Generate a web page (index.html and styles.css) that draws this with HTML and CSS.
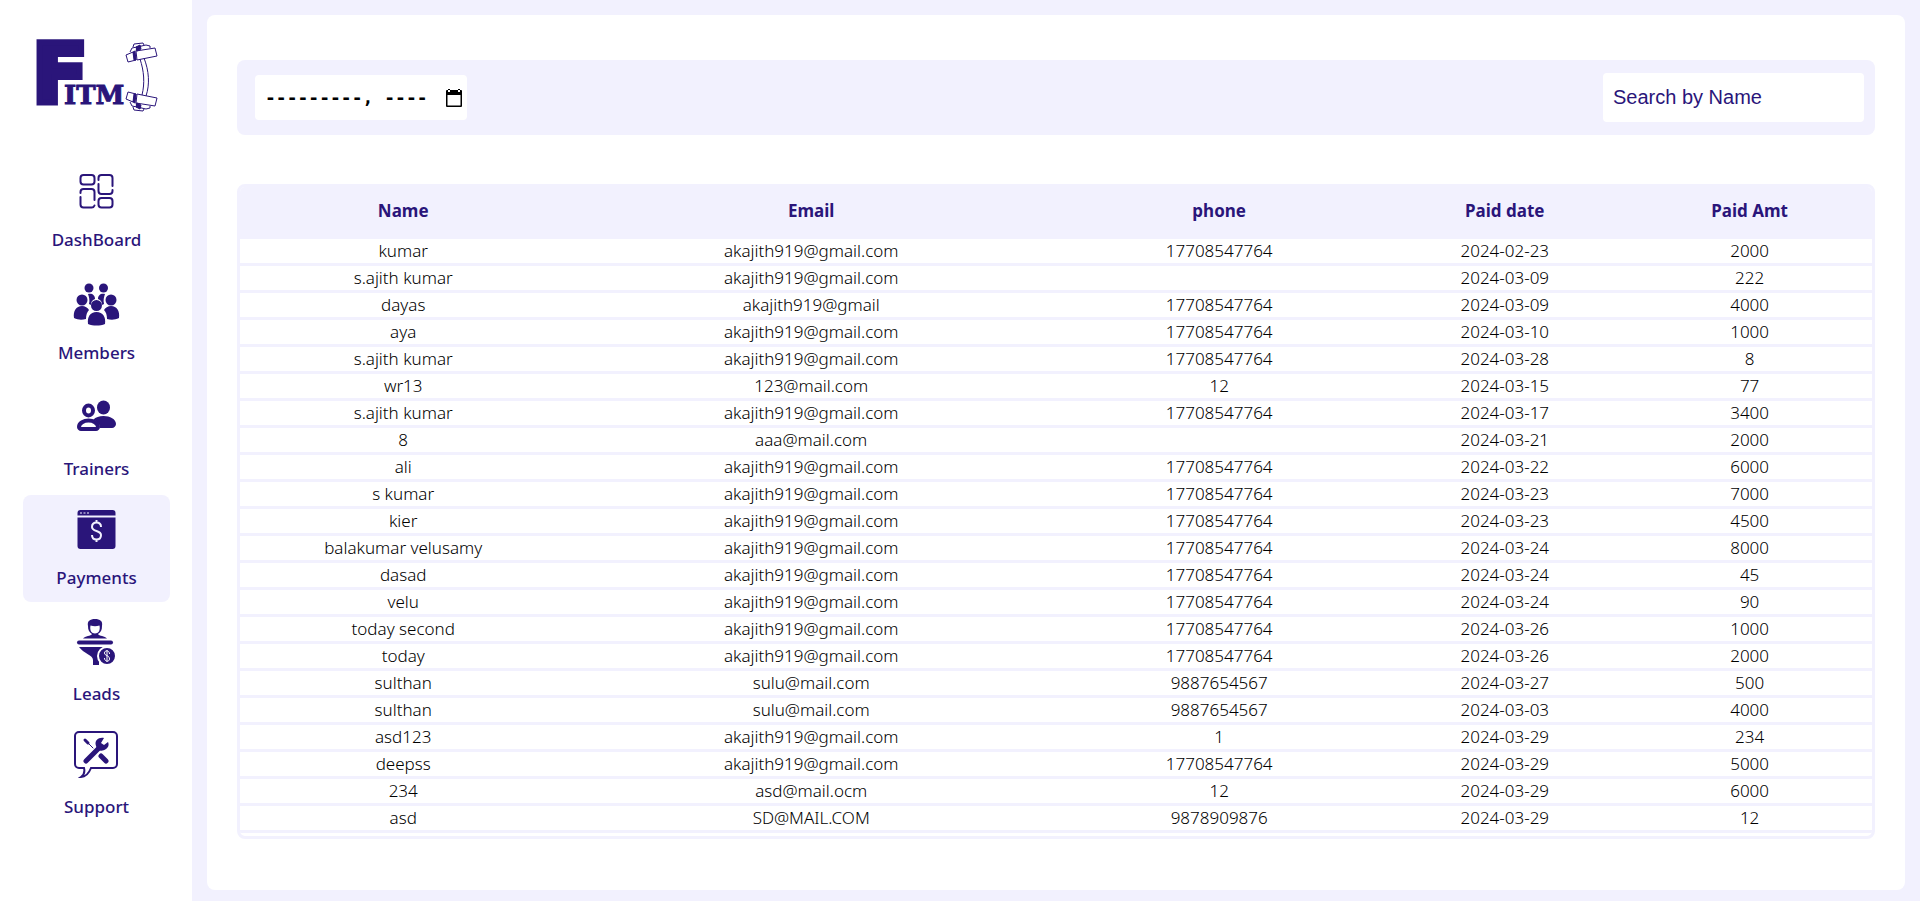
FILE: index.html
```html
<!DOCTYPE html>
<html lang="en">

<head>
    <meta charset="UTF-8">
    <meta name="viewport" content="width=device-width, initial-scale=1.0">
    <title>Payments</title>
    <link rel="stylesheet" href="styles.css">
</head>

<body>
    <div class="app">
        <aside class="sidebar">
            <svg class="logo" width="122" height="74" viewBox="36 39 122 74" role="img" aria-label="FITM">
                <text class="logo-f" x="32" y="102">F</text>
                <text class="logo-itm" x="64" y="104">ITM</text>
                <g class="line">
                    <path d="M140 59c4 12 5 24 2 36M144 58c5 13 6 26 2 38" />
                    <g id="weight">
                        <path d="M126 55l7-3 3 8-8 2z" />
                        <path d="M136 51l19-3 2 8-20 4z" />
                        <path d="M130 52l2-4 5-1-1 4M137 47l9-2 4 1v2M133 47l1-3 9-1 1 2M138 50l3-4" />
                        <path class="solid" d="M133 52l2-1 1 9-2 0zM136 47l4-2 1 4-4 2z" />
                    </g>
                    <use href="#weight" transform="matrix(1 0 0 -1 0 154)" />
                </g>
            </svg>
            <nav class="menu">
                <a class="menu-item" href="#">
                    <svg class="icon" width="48" height="40" viewBox="1 0 48 40">
                        <g class="stroke">
                            <rect x="8.500" y="3" width="14" height="9.500" rx="3" />
                            <rect x="26.500" y="26" width="14" height="9.500" rx="3" />
                            <path d="M26.500 8V6a3 3 0 0 1 3-3h8a3 3 0 0 1 3 3v8M26.500 12v7a3 3 0 0 0 3 3h8a3 3 0 0 0 3-3v-1" />
                            <path d="M8.500 21v-1a3 3 0 0 1 3-3h8a3 3 0 0 1 3 3v8M8.500 25v7.500a3 3 0 0 0 3 3h8a3 3 0 0 0 3-2" />
                        </g>
                    </svg>
                    <span>DashBoard</span>
                </a>
                <a class="menu-item" href="#">
                    <svg class="icon" width="48" height="44" viewBox="1 0 48 44">
                        <circle cx="17" cy="7" r="4.500" />
                        <circle cx="31.500" cy="7" r="4.500" />
                        <path d="M16 13c4-1 7 1 7 5-3 1-4 3-4 6l-2-1c1-4 0-7-1-10zM33 13c-4-1-7 1-7 5 3 1 4 3 4 6l2-1c-1-4 0-7 1-10z" />
                        <circle cx="10" cy="19" r="5.500" />
                        <circle cx="39" cy="19" r="5.500" />
                        <path d="M2 37c-1-7 2-12 8-12 3 0 6 2 7 4-2 2-3 5-3 9-4 1-8 1-12-1zM47 37c1-7-2-12-8-12-3 0-6 2-7 4 2 2 3 5 3 9 4 1 8 1 12-1z" />
                        <circle cx="24.500" cy="24.500" r="5.500" />
                        <path d="M16 43c-1-7 2-12 8.500-12s9.500 5 8.500 12c-5 2-12 2-17 0z" />
                    </svg>
                    <span>Members</span>
                </a>
                <a class="menu-item" href="#">
                    <svg class="icon" width="48" height="47" viewBox="1 0 48 47">
                        <ellipse cx="31.500" cy="13.500" rx="6.500" ry="7" />
                        <path d="M21 26c3-3 6-4 10.500-4C38 22 44 25 44 30c0 2-2 4-4 4H28c0-4-3-7-7-8z" />
                        <ellipse class="ring" cx="16.500" cy="16.500" rx="4.500" ry="5" />
                        <path class="ring body" d="M7 33c0-4 5-6.500 9.500-6.500S26 29 26 33c0 1-1 2-2 2H9c-1 0-2-1-2-2z" />
                    </svg>
                    <span>Trainers</span>
                </a>
                <a class="menu-item active" href="#">
                    <svg class="icon" width="48" height="40" viewBox="1 0 48 40">
                        <path d="M5.500 5.500V3a3 3 0 0 1 3-3h32a3 3 0 0 1 3 3v2.500zM5.500 7.500h38V36a3 3 0 0 1-3 3h-32a3 3 0 0 1-3-3z" />
                        <path class="light dots" d="M8 3h2M11.500 3h2M15 3h2" />
                        <path class="light" d="M29 17c0-3-2-4.500-4.500-4.500S20 14 20 17c0 5 9 3 9 8 0 3-2 4.500-4.500 4.500S20 28 20 25M24.500 10v3M24.500 29v3" />
                    </svg>
                    <span>Payments</span>
                </a>
                <a class="menu-item" href="#">
                    <svg class="icon" width="48" height="47" viewBox="1 0 48 47">
                        <path d="M16 7c-1-5 2-7 7-7s8 2 7 7c0 4-1 6-4 8 1 2 7 2 9 4.500H11c2-2.500 8-2.500 9-4.500-3-2-4-4-4-8z" />
                        <path class="face" d="M18.500 6.500c3 1 6 1 9 0 1 5-1 8-4.500 8s-5.500-3-4.500-8z" />
                        <rect x="5" y="21.500" width="36" height="4" rx="2" />
                        <path d="M7 28h27c-7 1-9 7-7 12v6h-6v-5c0-5-9-6-14-13z" />
                        <circle class="coin" cx="35" cy="37" r="9" />
                        <path class="face-line" d="M37.500 35c0-4-5-4-5-1s5 2 5 6c0 3-5 3-5-1M35 31v12" />
                    </svg>
                    <span>Leads</span>
                </a>
                <a class="menu-item" href="#">
                    <svg class="icon" width="48" height="44" viewBox="1 0 48 44">
                        <path class="bubble" d="M7-3h34a4 4 0 0 1 4 4v28a4 4 0 0 1-4 4H19c-2 5-5 9-10 9 3-2 4-5 3-9H7a4 4 0 0 1-4-4V1a4 4 0 0 1 4-4z" />
                        <path class="driver" d="M13 5l3 3" />
                        <path class="driver thin" d="M15 7l6 6" />
                        <path class="handle" d="M29 21l5 5M14 26l14-14" />
                        <path d="M32 3c-5-1-10 2-8 8 1 5 6 6 10 3 3-2 3-5 2-7l-4 3-3-2z" />
                    </svg>
                    <span>Support</span>
                </a>
            </nav>
        </aside>

        <main class="content">
            <section class="panel">
                <form class="toolbar">
                    <div class="month">
                        <input class="month-input" type="text" value="---------, ----" aria-label="Month">
                        <button class="picker" type="button" aria-label="Open calendar">
                            <svg width="16" height="18" viewBox="0 0 16 18">
                                <path d="M1 1h14a1 1 0 0 1 1 1v15a1 1 0 0 1-1 1H1a1 1 0 0 1-1-1V2a1 1 0 0 1 1-1zM1.500 6v10.500h13V6zM2 0h2v3H2zM12 0h2v3h-2z" fill-rule="evenodd" />
                            </svg>
                        </button>
                    </div>
                    <input class="search" type="text" placeholder="Search by Name" aria-label="Search by Name">
                </form>
                <div class="table-box">
                    <table class="payments">
                        <thead>
                            <tr><th class="wide">Name</th><th class="widest">Email</th><th class="wide">phone</th><th>Paid date</th><th>Paid Amt</th></tr>
                        </thead>
                        <tbody>
                            <tr><td>kumar</td><td>akajith919@gmail.com</td><td>17708547764</td><td>2024-02-23</td><td>2000</td></tr>
                            <tr><td>s.ajith kumar</td><td>akajith919@gmail.com</td><td></td><td>2024-03-09</td><td>222</td></tr>
                            <tr><td>dayas</td><td>akajith919@gmail</td><td>17708547764</td><td>2024-03-09</td><td>4000</td></tr>
                            <tr><td>aya</td><td>akajith919@gmail.com</td><td>17708547764</td><td>2024-03-10</td><td>1000</td></tr>
                            <tr><td>s.ajith kumar</td><td>akajith919@gmail.com</td><td>17708547764</td><td>2024-03-28</td><td>8</td></tr>
                            <tr><td>wr13</td><td>123@mail.com</td><td>12</td><td>2024-03-15</td><td>77</td></tr>
                            <tr><td>s.ajith kumar</td><td>akajith919@gmail.com</td><td>17708547764</td><td>2024-03-17</td><td>3400</td></tr>
                            <tr><td>8</td><td>aaa@mail.com</td><td></td><td>2024-03-21</td><td>2000</td></tr>
                            <tr><td>ali</td><td>akajith919@gmail.com</td><td>17708547764</td><td>2024-03-22</td><td>6000</td></tr>
                            <tr><td>s kumar</td><td>akajith919@gmail.com</td><td>17708547764</td><td>2024-03-23</td><td>7000</td></tr>
                            <tr><td>kier</td><td>akajith919@gmail.com</td><td>17708547764</td><td>2024-03-23</td><td>4500</td></tr>
                            <tr><td>balakumar velusamy</td><td>akajith919@gmail.com</td><td>17708547764</td><td>2024-03-24</td><td>8000</td></tr>
                            <tr><td>dasad</td><td>akajith919@gmail.com</td><td>17708547764</td><td>2024-03-24</td><td>45</td></tr>
                            <tr><td>velu</td><td>akajith919@gmail.com</td><td>17708547764</td><td>2024-03-24</td><td>90</td></tr>
                            <tr><td>today second</td><td>akajith919@gmail.com</td><td>17708547764</td><td>2024-03-26</td><td>1000</td></tr>
                            <tr><td>today</td><td>akajith919@gmail.com</td><td>17708547764</td><td>2024-03-26</td><td>2000</td></tr>
                            <tr><td>sulthan</td><td>sulu@mail.com</td><td>9887654567</td><td>2024-03-27</td><td>500</td></tr>
                            <tr><td>sulthan</td><td>sulu@mail.com</td><td>9887654567</td><td>2024-03-03</td><td>4000</td></tr>
                            <tr><td>asd123</td><td>akajith919@gmail.com</td><td>1</td><td>2024-03-29</td><td>234</td></tr>
                            <tr><td>deepss</td><td>akajith919@gmail.com</td><td>17708547764</td><td>2024-03-29</td><td>5000</td></tr>
                            <tr><td>234</td><td>asd@mail.ocm</td><td>12</td><td>2024-03-29</td><td>6000</td></tr>
                            <tr><td>asd</td><td>SD@MAIL.COM</td><td>9878909876</td><td>2024-03-29</td><td>12</td></tr>
                        </tbody>
                    </table>
                </div>
            </section>
        </main>
    </div>
</body>

</html>
```

FILE: styles.css
```css
* {
    box-sizing: border-box;
    margin: 0;
    padding: 0;
}

body {
    font-family: "Segoe UI", "Noto Sans", "Open Sans", sans-serif;
    color: #000;
}

.app {
    display: flex;
    min-height: 100vh;
    background-color: #f2f1fe;
}

/* sidebar */
.sidebar {
    width: 10%;
    min-width: 192px;
    padding: 39px 22px 0 23px;
    background-color: white;
}

.logo {
    display: block;
    margin: 0 auto 44px;
    overflow: visible;
}

.logo text {
    fill: #2a157a;
    stroke: #2a157a;
}

.logo-f {
    font-family: "DejaVu Sans", sans-serif;
    font-size: 82px;
    font-weight: bold;
    stroke-width: 6;
}

.logo-itm {
    font-family: "DejaVu Serif", serif;
    font-size: 26px;
    font-weight: bold;
    stroke-width: 1;
}

.line {
    fill: none;
    stroke: #2a157a;
}

.solid {
    fill: #2a157a;
}

.menu {
    display: flex;
    flex-direction: column;
    gap: 2px;
}

.menu-item {
    display: flex;
    flex-direction: column;
    align-items: center;
    gap: 16px;
    padding: 15px 0 12px;
    border-radius: 8px;
    color: #2a157a;
    font-size: 17px;
    font-weight: 500;
    line-height: 24px;
    text-decoration: none;
}

.active {
    background-color: #f2f1fe;
}

.icon {
    fill: #2a157a;
    overflow: visible;
}

.stroke,
.ring,
.bubble,
.driver,
.handle {
    fill: none;
    stroke: #2a157a;
    stroke-width: 2;
    stroke-linecap: round;
}

.ring {
    stroke-width: 4;
}

.body {
    fill: white;
}

.handle {
    stroke-width: 5;
}

.driver {
    stroke-width: 3;
}

.thin {
    stroke-width: 1;
}

.light {
    fill: none;
    stroke: #f2f1fe;
    stroke-width: 2;
}

.dots {
    stroke-width: 1;
}

.face {
    fill: white;
}

.coin {
    stroke: white;
    stroke-width: 2;
}

.face-line {
    fill: none;
    stroke: white;
}

/* content */
.content {
    flex: 1;
    display: flex;
    padding: 15px 15px 11px;
}

.panel {
    flex: 1;
    display: flex;
    flex-direction: column;
    gap: 49px;
    padding: 45px 30px 51px;
    background-color: white;
    border-radius: 8px;
}

.toolbar {
    display: flex;
    justify-content: space-between;
    align-items: center;
    height: 75px;
    padding: 0 11px 0 18px;
    background-color: #f2f1fe;
    border-radius: 8px;
}

.month,
.search {
    border-radius: 4px;
    background-color: white;
}

.month {
    display: flex;
    align-items: center;
    width: 212px;
    height: 45px;
    padding: 0 5px 0 10px;
}

.month-input {
    flex: 1;
    min-width: 0;
    border: none;
    outline: none;
    background: none;
    font-family: "DejaVu Sans Mono", monospace;
    font-size: 18px;
    font-weight: bold;
}

.picker {
    display: flex;
    border: none;
    background: none;
}

.search {
    width: 261px;
    height: 49px;
    padding: 0 10px;
    border: none;
    outline: none;
    font-family: "Liberation Sans", Arial, sans-serif;
    font-size: 20px;
    color: #2a157a;
}

.search::placeholder {
    color: #2a157a;
}

/* table */
.table-box {
    flex: 1;
    border: 3px solid #f2f1fe;
    border-radius: 8px;
    overflow: hidden;
}

.payments {
    width: 100%;
    table-layout: fixed;
    border-collapse: separate;
    border-spacing: 0;
    text-align: center;
}

.payments th {
    width: 15%;
    height: 52px;
    padding-bottom: 6px;
    background-color: #f2f1fe;
    color: #2a157a;
    font-size: 17px;
    font-weight: bold;
}

.payments .wide {
    width: 20%;
}

.payments .widest {
    width: 30%;
}

.payments td {
    height: 27px;
    border-bottom: 3px solid #f2f1fe;
    font-size: 17px;
    font-weight: 300;
    line-height: 24px;
}
```
